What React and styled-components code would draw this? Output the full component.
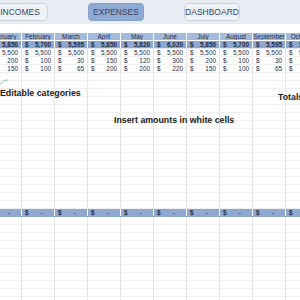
import styled, { createGlobalStyle, css } from 'styled-components'

const GlobalStyle = createGlobalStyle`
  html, body {
    margin: 0;
    padding: 0;
    background: #ffffff;
    overflow: hidden;
  }
  body {
    font-family: "Liberation Sans", Arial, sans-serif;
    color: #1d2a44;
  }
`

const Page = styled.div`
  width: 300px;
  height: 300px;
  overflow: hidden;
  position: relative;
`

const TopBar = styled.div`
  height: 24px;
  background: #e9ecf3;
  display: flex;
  align-items: flex-start;
  gap: 40px;
  padding-top: 3px;
  box-sizing: border-box;
  margin-left: -8px;
`

const NavButton = styled.div`
  width: 56px;
  height: 18px;
  box-sizing: border-box;
  border-radius: 4px;
  display: flex;
  align-items: center;
  justify-content: center;
  font-family: "Liberation Sans Narrow", "Liberation Sans", sans-serif;
  font-size: 8.5px;
  color: #3a4460;
  border: 1px solid ${(p) => (p.$active ? '#86a1cb' : '#cdd2dc')};
  background: ${(p) => (p.$active ? '#8fabd4' : '#eef1f6')};
`

const Sheet = styled.div`
  margin-top: 9px;
  margin-left: -11px;
  width: 330px;
`

const gridLines = css`
  background-image: repeating-linear-gradient(
    to right,
    transparent 0,
    transparent 32px,
    ${(p) => (p.$line || '#e3e3e3')} 32px,
    ${(p) => (p.$line || '#e3e3e3')} 33px
  );
`

const Row = styled.div`
  display: grid;
  grid-template-columns: repeat(10, 33px);
  height: 8px;
  box-sizing: border-box;
  border-bottom: 1px solid ${(p) => (p.$bottom || '#efefef')};
  background-color: ${(p) => p.$bg || '#ffffff'};
  ${gridLines}
  font-size: 6.4px;
  line-height: 7px;
  font-weight: ${(p) => (p.$bold ? 700 : 400)};
`

const MonthCell = styled.div`
  text-align: center;
  white-space: nowrap;
  overflow: hidden;
  padding-right: 1px;
`

const MoneyCell = styled.div`
  display: flex;
  justify-content: space-between;
  padding: 0 ${(p) => p.$padRight || 4}px 0 3px;
  white-space: nowrap;
  overflow: hidden;
`

const Dollar = styled.span`
  font-weight: ${(p) => (p.$bold ? 700 : 'inherit')};
`

const LabelCell = styled.div`
  grid-column: ${(p) => p.$col} / span ${(p) => p.$span};
  padding-left: ${(p) => p.$pad || 0}px;
  margin-top: ${(p) => p.$shift || 0}px;
  font-family: "Liberation Sans", Arial, sans-serif;
  font-weight: 700;
  font-size: 8.8px;
  line-height: 8px;
  color: #1a1a1a;
  white-space: nowrap;
`

const Mark = styled.svg`
  position: absolute;
  left: 0;
  top: 79px;
`

const months = ['January', 'February', 'March', 'April', 'May', 'June', 'July', 'August', 'September', 'October']
const totals = ['5,850', '5,700', '5,595', '5,850', '5,820', '6,020', '5,850', '5,700', '5,595', '5,850']
const data = [
  ['5,500', '5,500', '5,500', '5,500', '5,500', '5,500', '5,500', '5,500', '5,500', '5,500'],
  ['200', '100', '30', '150', '120', '300', '200', '100', '30', '150'],
  ['150', '100', '65', '200', '200', '220', '150', '100', '65', '200'],
]

const TOTAL_ROWS = 34

const App = () => {
  const bodyRows = []
  for (let i = 5; i < TOTAL_ROWS; i++) {
    if (i === 7) {
      bodyRows.push(
        <Row key={i}>
          <LabelCell $col={1} $span={4} $pad={11}>Editable categories</LabelCell>
          <LabelCell $col={9} $span={2} $pad={25} $shift={4}>Totals</LabelCell>
        </Row>
      )
    } else if (i === 10) {
      bodyRows.push(
        <Row key={i}>
          <LabelCell $col={4} $span={5} $pad={26} $shift={3}>Insert amounts in white cells</LabelCell>
        </Row>
      )
    } else if (i === 22) {
      bodyRows.push(
        <Row key={i} $bg="#8ea8d0" $line="#ffffff" $bottom="#8ea8d0">
          {months.map((m) => (
            <MoneyCell key={m} $padRight={12}>
              <Dollar $bold>$</Dollar>
              <span>-</span>
            </MoneyCell>
          ))}
        </Row>
      )
    } else {
      bodyRows.push(<Row key={i} />)
    }
  }

  return (
    <Page>
      <GlobalStyle />
      <TopBar>
        <NavButton>INCOMES</NavButton>
        <NavButton $active>EXPENSES</NavButton>
        <NavButton>DASHBOARD</NavButton>
      </TopBar>
      <Sheet>
        <Row $bg="#a4badc" $line="#ffffff" $bottom="#ffffff">
          {months.map((m) => (
            <MonthCell key={m}>{m}</MonthCell>
          ))}
        </Row>
        <Row $bg="#8ea8d0" $line="#ffffff" $bottom="#dfe6f1" $bold>
          {totals.map((t, i) => (
            <MoneyCell key={i}>
              <Dollar>$</Dollar>
              <span>{t}</span>
            </MoneyCell>
          ))}
        </Row>
        {data.map((row, r) => (
          <Row key={r}>
            {row.map((v, i) => (
              <MoneyCell key={i}>
                <Dollar>$</Dollar>
                <span>{v}</span>
              </MoneyCell>
            ))}
          </Row>
        ))}
        {bodyRows}
      </Sheet>
      <Mark width="9" height="6" viewBox="0 0 9 6">
        <path d="M0.5 5.5 C2 2 5 1 8.5 1" stroke="#8fc7c0" strokeWidth="1" fill="none" />
      </Mark>
    </Page>
  )
}

export default App
